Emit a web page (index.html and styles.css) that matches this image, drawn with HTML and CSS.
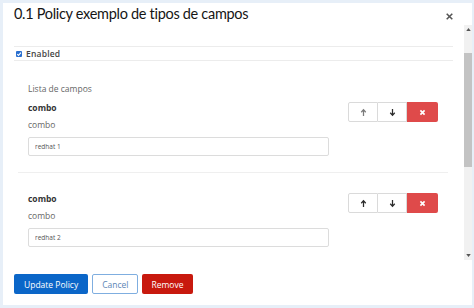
FILE: index.html
```html
<!DOCTYPE html>
<html lang="pt">
<head>
    <meta charset="UTF-8">
    <meta name="viewport" content="width=device-width, initial-scale=1.0">
    <title>Policy</title>
    <link rel="stylesheet" href="styles.css">
</head>
<body>
    <div class="modal">
        <header class="modal-header">
            <h1 class="modal-title">0.1 Policy exemplo de tipos de campos</h1>
            <button class="modal-close" aria-label="Close">
                <svg viewBox="0 0 10 10" width="7" height="7"><path d="M1 1L9 9M9 1L1 9" stroke="#555" stroke-width="2.2"/></svg>
            </button>
        </header>
        <div class="modal-middle">
            <div class="modal-body">
                <div class="enabled-row">
                    <span class="check">
                        <svg viewBox="0 0 10 10" width="6" height="6"><path d="M2 5.2L4.2 7.4L8.2 2.6" fill="none" stroke="#fff" stroke-width="1.8"/></svg>
                    </span>
                    <label class="enabled-label">Enabled</label>
                </div>
                <div class="fields">
                    <div class="fields-title">Lista de campos</div>
                    <div class="field">
                        <div class="field-main">
                            <div class="field-label">combo</div>
                            <div class="field-help">combo</div>
                            <input class="field-input" type="text" value="redhat 1">
                        </div>
                        <div class="btn-group">
                            <button class="btn-move muted"><svg viewBox="0 0 10 12" width="7" height="9"><path d="M5 11V3M1.8 5.6L5 2L8.2 5.6" fill="none" stroke="currentColor" stroke-width="1.8"/></svg></button>
                            <button class="btn-move"><svg viewBox="0 0 10 12" width="7" height="9"><path d="M5 1V9M1.8 6.4L5 10L8.2 6.4" fill="none" stroke="currentColor" stroke-width="1.8"/></svg></button>
                            <button class="btn-del"><svg viewBox="0 0 10 10" width="7" height="7"><path d="M2 2L8 8M8 2L2 8" stroke="#fff" stroke-width="2.4"/></svg></button>
                        </div>
                    </div>
                    <div class="field">
                        <div class="field-main">
                            <div class="field-label">combo</div>
                            <div class="field-help">combo</div>
                            <input class="field-input" type="text" value="redhat 2">
                        </div>
                        <div class="btn-group">
                            <button class="btn-move"><svg viewBox="0 0 10 12" width="7" height="9"><path d="M5 11V3M1.8 5.6L5 2L8.2 5.6" fill="none" stroke="currentColor" stroke-width="1.8"/></svg></button>
                            <button class="btn-move"><svg viewBox="0 0 10 12" width="7" height="9"><path d="M5 1V9M1.8 6.4L5 10L8.2 6.4" fill="none" stroke="currentColor" stroke-width="1.8"/></svg></button>
                            <button class="btn-del"><svg viewBox="0 0 10 10" width="7" height="7"><path d="M2 2L8 8M8 2L2 8" stroke="#fff" stroke-width="2.4"/></svg></button>
                        </div>
                    </div>
                </div>
            </div>
            <div class="scrollbar">
                <div class="sb-arrow"><svg viewBox="0 0 6 4" width="5" height="3"><path d="M0 4L3 0L6 4Z" fill="#555"/></svg></div>
                <div class="sb-track"><div class="sb-thumb"></div></div>
                <div class="sb-arrow"><svg viewBox="0 0 6 4" width="5" height="3"><path d="M0 0L3 4L6 0Z" fill="#555"/></svg></div>
            </div>
        </div>
        <footer class="modal-footer">
            <button class="btn btn-primary">Update Policy</button>
            <button class="btn btn-secondary">Cancel</button>
            <button class="btn btn-danger">Remove</button>
        </footer>
    </div>
</body>
</html>
```

FILE: styles.css
```css
*{
    margin: 0;
    padding: 0;
    box-sizing: border-box;
}
body{
    background: #e7eff8;
    padding: 3px 2px 3px 3px;
    font-family: "Open Sans", "Liberation Sans", sans-serif;
    color: #333;
}
.modal{
    width: 469px;
    height: 302px;
    background: #fff;
    display: flex;
    flex-direction: column;
}
.modal-header{
    height: 22px;
    display: flex;
    justify-content: space-between;
    padding-left: 11px;
    padding-right: 17px;
}
.modal-title{
    font-family: Lato, "Open Sans", sans-serif;
    font-size: 14.5px;
    font-weight: 400;
    line-height: 22px;
    letter-spacing: -0.3px;
    color: #151515;
}
.modal-close{
    border: 0;
    background: none;
    width: 11px;
    height: 11px;
    margin-top: 8px;
    display: flex;
    align-items: center;
    justify-content: center;
}
.modal-middle{
    height: 235px;
    display: flex;
}
.modal-body{
    flex: 1;
    overflow: hidden;
    padding: 21px 11px 0 11px;
}
.enabled-row{
    height: 15px;
    border-top: 1px solid #ececec;
    border-bottom: 1px solid #ececec;
    display: flex;
    align-items: center;
    gap: 4px;
    padding-left: 2px;
}
.check{
    width: 6px;
    height: 6px;
    background: #2a6fcf;
    border-radius: 1px;
    display: flex;
    align-items: center;
    justify-content: center;
}
.enabled-label{
    font-size: 8.5px;
    font-weight: 600;
    color: #444;
    letter-spacing: 0.2px;
}
.fields{
    padding: 0 13px 0 14px;
}
.fields-title{
    margin-top: 22px;
    margin-bottom: 7px;
    font-size: 8.5px;
    line-height: 12px;
    color: #666;
}
.field{
    display: flex;
    justify-content: space-between;
    align-items: flex-start;
    margin: 0 -8px 0 -10px;
    padding: 0 10px 16px 10px;
    border-bottom: 1px solid #efefef;
}
.field + .field{
    padding-top: 20px;
    border-bottom: 0;
}
.field-main{
    width: 301px;
}
.field-label{
    font-size: 8.5px;
    font-weight: 700;
    line-height: 12px;
    color: #333;
}
.field-help{
    margin-top: 5px;
    font-size: 8.5px;
    line-height: 12px;
    color: #666;
}
.field-input{
    margin-top: 6px;
    width: 301px;
    height: 19px;
    border: 1px solid #dcdcdc;
    border-radius: 2px;
    padding-left: 6px;
    font-family: inherit;
    font-size: 6.5px;
    color: #555;
    outline: none;
}
.btn-group{
    display: flex;
    height: 20px;
}
.btn-move, .btn-del{
    height: 20px;
    display: flex;
    align-items: center;
    justify-content: center;
}
.btn-move{
    width: 30px;
    background: #fff;
    border: 1px solid #dadada;
    color: #2b2b2b;
}
.btn-move:first-child{
    border-radius: 2px 0 0 2px;
}
.btn-move + .btn-move{
    width: 29px;
    border-left: 0;
}
.btn-move.muted{
    color: #7b7b7b;
}
.btn-del{
    width: 31px;
    border: 0;
    background: #df4a4a;
    border-radius: 0 2px 2px 0;
}
.scrollbar{
    width: 8px;
    background: #f1f1f1;
    display: flex;
    flex-direction: column;
}
.sb-arrow{
    height: 9px;
    display: flex;
    align-items: center;
    justify-content: center;
}
.sb-track{
    flex: 1;
    padding-top: 19px;
}
.sb-thumb{
    height: 114px;
    background: #c3c3c3;
}
.modal-footer{
    height: 45px;
    display: flex;
    gap: 4px;
    padding: 14px 0 0 11px;
}
.btn{
    height: 20px;
    padding: 0 9px;
    font-family: inherit;
    font-size: 8.5px;
    border-radius: 2px;
    border: 0;
}
.btn-primary{
    padding: 0 10px;
    background: #0b66c8;
    color: #fff;
}
.btn-secondary{
    background: #fff;
    border: 1px solid #7faee0;
    color: #5d86b6;
}
.btn-danger{
    background: #c8190e;
    color: #fff;
}
```
